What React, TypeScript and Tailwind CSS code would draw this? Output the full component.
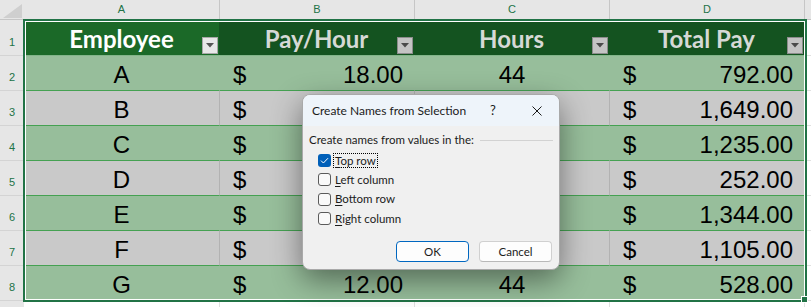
import React from "react";

type Row = { name: string; rate: string; hours: string; total: string };

const rows: Row[] = [
  { name: "A", rate: "18.00", hours: "44", total: "792.00" },
  { name: "B", rate: "", hours: "", total: "1,649.00" },
  { name: "C", rate: "", hours: "", total: "1,235.00" },
  { name: "D", rate: "", hours: "", total: "252.00" },
  { name: "E", rate: "", hours: "", total: "1,344.00" },
  { name: "F", rate: "", hours: "", total: "1,105.00" },
  { name: "G", rate: "12.00", hours: "44", total: "528.00" },
];

const dataFont = { fontFamily: '"Liberation Sans", Arial, sans-serif' };
const headFont = { fontFamily: 'Lato, "Open Sans", sans-serif' };
const uiFont = { fontFamily: 'Lato, "Noto Sans", sans-serif' };

function FilterButton({ active }: { active?: boolean }) {
  return (
    <div
      className={
        "absolute right-[1px] bottom-[1px] w-[16px] h-[17px] border flex items-center justify-center " +
        (active ? "bg-[#e8e8e8] border-[#a8a8a8]" : "bg-[#c4c4c4] border-[#8c8c8c]")
      }
    >
      <svg width="8" height="5" viewBox="0 0 8 5">
        <polygon points="0,0 8,0 4,4.5" fill={active ? "#555555" : "#4a4a4a"} />
      </svg>
    </div>
  );
}

function Checkbox({ checked }: { checked?: boolean }) {
  return checked ? (
    <div className="w-[13px] h-[13px] rounded-[3px] bg-[#005fb8] flex items-center justify-center shrink-0">
      <svg width="9" height="7" viewBox="0 0 9 7">
        <path d="M1 3.6 L3.4 6 L8 1.2" stroke="white" strokeWidth="1" fill="none" />
      </svg>
    </div>
  ) : (
    <div className="w-[13px] h-[13px] rounded-[3px] border border-[#5a5a5a] bg-[#f9f9f9] shrink-0" />
  );
}

export default function App() {
  return (
    <div className="relative w-[811px] h-[307px] overflow-hidden bg-white">
      <div className="grid grid-cols-[24px_195px_195px_195px_195px_1fr] grid-rows-[20px_repeat(8,35px)_1fr] h-full">
        {/* column header row */}
        <div className="bg-[#e6e6e6] border-b border-[#c6c6c6] relative">
          <svg className="absolute left-[3px] top-[4px]" width="19" height="14" viewBox="0 0 19 14">
            <polygon points="19,0 19,14 0,14" fill="#cfcfcf" />
          </svg>
        </div>
        {["A", "B", "C", "D"].map((c, i) => (
          <div
            key={c}
            className={
              "bg-[#e6e6e6] border-b border-[#c6c6c6] flex items-center justify-center text-[11px] text-[#217346] " +
              (i > 0 ? "border-l border-l-[#c6c6c6]" : "")
            }
            style={dataFont}
          >
            {c}
          </div>
        ))}
        <div className="bg-[#e6e6e6] border-b border-[#c6c6c6] border-l border-l-[#c6c6c6]" />

        {/* row 1 headers */}
        <div className="bg-[#e6e6e6] flex items-end justify-center pb-[5px] text-[11px] text-[#217346]" style={dataFont}>
          1
        </div>
        {["Employee", "Pay/Hour", "Hours", "Total Pay"].map((h, i) => (
          <div
            key={h}
            className={
              "relative flex items-end justify-center pb-[4px] text-[24px] leading-none font-bold " +
              (i === 0 ? "bg-[#1b6928] text-white" : "bg-[#145320] text-[#d6d9d6]")
            }
            style={headFont}
          >
            <span>{h}</span>
            <FilterButton active={i === 0} />
          </div>
        ))}
        <div className="bg-white" />

        {/* data rows */}
        {rows.map((r, idx) => {
          const green = idx % 2 === 0;
          const bg = green ? "bg-[#97be9b]" : "bg-[#c9c9c9]";
          const vline = green ? "border-l border-l-[#97be9b]" : "border-l border-l-[#b2b2b2]";
          const top = idx === 0 ? "border-t border-t-[#82b58a]" : "border-t border-t-[#45a152]";
          return (
            <React.Fragment key={r.name}>
              <div
                className="bg-[#e6e6e6] border-t border-t-[#d4d4d4] flex items-end justify-center pb-[5px] text-[11px] text-[#217346]"
                style={dataFont}
              >
                {idx + 2}
              </div>
              <div
                className={`${bg} ${top} flex items-end justify-center pb-[3px] text-[24px] leading-none text-black`}
                style={dataFont}
              >
                {r.name}
              </div>
              <div
                className={`${bg} ${top} ${vline} flex items-end justify-between pl-[13px] pr-[11px] pb-[3px] text-[24px] leading-none text-black`}
                style={dataFont}
              >
                <span>$</span>
                <span>{r.rate}</span>
              </div>
              <div
                className={`${bg} ${top} ${vline} flex items-end justify-center pb-[3px] text-[24px] leading-none text-black`}
                style={dataFont}
              >
                {r.hours}
              </div>
              <div
                className={`${bg} ${top} ${vline} flex items-end justify-between pl-[13px] pr-[11px] pb-[3px] text-[24px] leading-none text-black`}
                style={dataFont}
              >
                <span>$</span>
                <span>{r.total}</span>
              </div>
              <div className="bg-white border-t border-t-[#e1e1e1] border-l border-l-[#e1e1e1]" />
            </React.Fragment>
          );
        })}

        {/* row 9 */}
        <div className="bg-[#e6e6e6] border-t border-t-[#d4d4d4]" />
        <div className="bg-white border-t border-t-[#e1e1e1]" />
        <div className="bg-white border-t border-t-[#e1e1e1] border-l border-l-[#e1e1e1]" />
        <div className="bg-white border-t border-t-[#e1e1e1] border-l border-l-[#e1e1e1]" />
        <div className="bg-white border-t border-t-[#e1e1e1] border-l border-l-[#e1e1e1]" />
        <div className="bg-white border-t border-t-[#e1e1e1] border-l border-l-[#e1e1e1]" />
      </div>

      {/* selection border */}
      <div className="absolute left-[23px] top-[19px] w-[784px] h-[283px] border-2 border-[#217346] pointer-events-none">
        <div className="w-full h-full border border-white" />
      </div>
      <div className="absolute left-[801px] top-[296px] w-[7px] h-[7px] bg-[#217346] border border-white" />

      {/* dialog */}
      <div
        className="absolute left-[302px] top-[94px] w-[258px] h-[176px] rounded-[8px] border border-[#a9a9a9] overflow-hidden bg-[#f0f0f0] shadow-[0_10px_30px_rgba(0,0,0,0.45)] flex flex-col text-[11.5px] text-[#1b1b1b]"
        style={uiFont}
      >
        <div className="h-[31px] bg-[#eef4fa] flex items-center pl-[9px] shrink-0">
          <span className="flex-1 text-[12px]">Create Names from Selection</span>
          <span className="w-[20px] text-center text-[13px] mr-[29px]">?</span>
          <svg className="mr-[17px]" width="10" height="10" viewBox="0 0 10 10">
            <path d="M0.5 0.5 L9.5 9.5 M9.5 0.5 L0.5 9.5" stroke="#1b1b1b" strokeWidth="1" />
          </svg>
        </div>
        <div className="flex flex-col pl-[6px] pr-[6px] pt-[6px]">
          <div className="flex items-center gap-[6px] h-[16px]">
            <span>Create names from values in the:</span>
            <div className="flex-1 h-px bg-[#d2d2d2]" />
          </div>
          <div className="flex flex-col pl-[9px] mt-[3px]">
            <div className="flex items-center h-[19px] gap-[2px]">
              <Checkbox checked />
              <span className="border border-dotted border-black px-[1px] leading-[13px]">
                <u className="underline-offset-2">T</u>op row
              </span>
            </div>
            <div className="flex items-center h-[19px] gap-[4px]">
              <Checkbox />
              <span>
                <u className="underline-offset-2">L</u>eft column
              </span>
            </div>
            <div className="flex items-center h-[20px] gap-[4px]">
              <Checkbox />
              <span>
                <u className="underline-offset-2">B</u>ottom row
              </span>
            </div>
            <div className="flex items-center h-[19px] gap-[4px]">
              <Checkbox />
              <span>
                <u className="underline-offset-2">R</u>ight column
              </span>
            </div>
          </div>
          <div className="flex justify-end gap-[10px] mt-[13px] pr-[1px]">
            <div className="w-[73px] h-[21px] rounded-[4px] border border-[#0067c0] bg-[#fdfdfd] flex items-center justify-center">
              OK
            </div>
            <div className="w-[73px] h-[21px] rounded-[4px] border border-[#d0d0d0] border-b-[#b8b8b8] bg-[#fdfdfd] flex items-center justify-center">
              Cancel
            </div>
          </div>
        </div>
      </div>
    </div>
  );
}
